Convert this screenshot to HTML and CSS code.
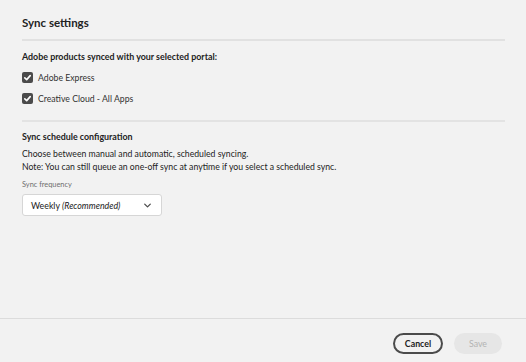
FILE: index.html
```html
<!DOCTYPE html>
<html lang="en">
<head>
<meta charset="utf-8">
<title>Sync settings</title>
<link rel="stylesheet" href="styles.css">
</head>
<body>
<div class="page">
  <header class="title-bar">
    <h1 class="title">Sync settings</h1>
  </header>
  <main class="content">
    <section class="products">
      <h2 class="heading">Adobe products synced with your selected portal:</h2>
      <ul class="checks">
        <li class="check-row">
          <span class="checkbox"><svg viewBox="0 0 11 11" width="11" height="11"><rect x="0" y="0" width="11" height="11" rx="2" fill="#4b4b4b"/><path d="M2.8 5.8 L4.7 7.6 L8.2 3.6" fill="none" stroke="#fff" stroke-width="1.6" stroke-linecap="round" stroke-linejoin="round"/></svg></span>
          <span class="check-label">Adobe Express</span>
        </li>
        <li class="check-row">
          <span class="checkbox"><svg viewBox="0 0 11 11" width="11" height="11"><rect x="0" y="0" width="11" height="11" rx="2" fill="#4b4b4b"/><path d="M2.8 5.8 L4.7 7.6 L8.2 3.6" fill="none" stroke="#fff" stroke-width="1.6" stroke-linecap="round" stroke-linejoin="round"/></svg></span>
          <span class="check-label">Creative Cloud - All Apps</span>
        </li>
      </ul>
    </section>
    <section class="schedule">
      <h2 class="heading">Sync schedule configuration</h2>
      <p class="text">Choose between manual and automatic, scheduled syncing.</p>
      <p class="text">Note: You can still queue an one-off sync at anytime if you select a scheduled sync.</p>
      <label class="field-label">Sync frequency</label>
      <div class="picker">
        <span class="picker-value">Weekly <em>(Recommended)</em></span>
        <svg class="chevron" viewBox="0 0 10 6" width="7" height="5"><path d="M1 1 L5 5 L9 1" fill="none" stroke="#4b4b4b" stroke-width="1.8" stroke-linecap="round" stroke-linejoin="round"/></svg>
      </div>
    </section>
  </main>
  <footer class="actions">
    <button class="btn btn-secondary">Cancel</button>
    <button class="btn btn-disabled">Save</button>
  </footer>
</div>
</body>
</html>
```
FILE: styles.css
```css
* { box-sizing: border-box; }
html, body {
  margin: 0;
  padding: 0;
  background: #f2f2f2;
}
body {
  font-family: Lato, "Open Sans", "Liberation Sans", sans-serif;
  color: #222;
}
.page {
  height: 362px;
  display: flex;
  flex-direction: column;
}
.title-bar {
  margin: 0 21px 0 22px;
  padding-top: 13px;
  padding-bottom: 6px;
  border-bottom: 2px solid #e1e1e1;
}
.title {
  margin: 0;
  font-size: 11.5px;
  line-height: 20px;
  font-weight: 700;
  color: #222;
}
.content {
  flex: 1;
  margin: 0 21px 0 22px;
}
.products {
  padding-top: 8px;
  padding-bottom: 11px;
  border-bottom: 2px solid #e3e3e3;
}
.heading {
  margin: 0;
  font-size: 8.9px;
  line-height: 16px;
  font-weight: 700;
  color: #222;
}
.checks {
  list-style: none;
  margin: 2px 0 0;
  padding: 0;
}
.check-row {
  height: 21px;
  display: flex;
  align-items: center;
  gap: 5px;
  font-size: 8.7px;
  color: #333;
}
.checkbox {
  display: flex;
  width: 11px;
  height: 11px;
}
.schedule {
  padding-top: 7px;
}
.schedule .heading {
  margin-bottom: 2px;
}
.text {
  margin: 0;
  font-size: 8.7px;
  line-height: 13px;
  color: #222;
}
.field-label {
  display: block;
  margin-top: 6px;
  font-size: 7.4px;
  line-height: 12px;
  color: #6e6e6e;
}
.picker {
  margin-top: 3px;
  width: 140px;
  height: 22px;
  background: #fff;
  border: 1px solid #d6d6d6;
  border-radius: 3px;
  display: flex;
  align-items: center;
  justify-content: space-between;
  padding: 0 10px 0 8px;
  font-size: 8.8px;
  color: #222;
  white-space: nowrap;
}
.picker-value em {
  font-style: italic;
}
.actions {
  height: 44px;
  border-top: 1px solid #dcdcdc;
  display: flex;
  justify-content: flex-end;
  align-items: flex-start;
  gap: 11px;
  padding: 14px 24px 0 0;
}
.btn {
  height: 21px;
  border-radius: 11px;
  font-family: inherit;
  font-size: 8.8px;
  font-weight: 700;
  padding: 0;
  width: 50px;
  display: flex;
  align-items: center;
  justify-content: center;
}
.btn-secondary {
  background: transparent;
  border: 2px solid #4b4b4b;
  color: #222;
}
.btn-disabled {
  width: 48px;
  background: #e6e6e6;
  border: none;
  color: #b3b3b3;
  font-weight: 400;
}
```
